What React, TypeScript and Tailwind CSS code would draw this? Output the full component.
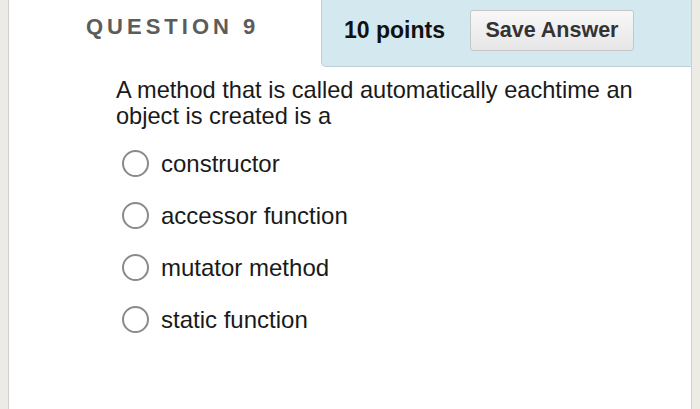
import React from "react";

const options = ["constructor", "accessor function", "mutator method", "static function"];

export default function App() {
  return (
    <div className="w-[700px] h-[409px] bg-[#ecebe6] flex overflow-hidden" style={{ fontFamily: '"Liberation Sans", Arial, sans-serif' }}>
      <div className="w-[8px] shrink-0 bg-[#ecebe6]" />
      <div className="w-[684px] shrink-0 bg-white border-l border-r border-[#cfcfcf] flex flex-col">
        <div className="flex h-[67px]">
          <div className="w-[312px] shrink-0 pl-[77px] pt-[10px]">
            <div className="text-[22px] font-bold tracking-[4px] text-[#5c5c5c]">QUESTION 9</div>
          </div>
          <div className="flex-1 bg-[#d3e8ef] border-l border-b border-[#bdd0d8] rounded-bl-[5px] flex items-center pl-[22px] pb-[6px] gap-[25px]">
            <div className="text-[23px] font-bold text-[#111]">10 points</div>
            <button className="h-[41px] w-[164px] rounded-[3px] border border-[#c6c6c6] bg-gradient-to-b from-[#f8f8f8] to-[#e6e6e6] text-[21.5px] font-bold text-[#333]">
              Save Answer
            </button>
          </div>
        </div>
        <div className="pl-[107px] pr-[30px] pt-[10px] text-[23.6px] leading-[26px] text-[#1a1a1a]">
          A method that is called automatically eachtime an object is created is a
        </div>
        <div className="flex flex-col pl-[113px] pt-[21px] gap-[25px]">
          {options.map((o) => (
            <div key={o} className="flex items-center gap-[12px] h-[27px]">
              <div className="w-[27px] h-[27px] rounded-full border-[2.5px] border-[#8a8a8a] bg-white shrink-0" />
              <div className="text-[24px] text-[#1a1a1a]">{o}</div>
            </div>
          ))}
        </div>
      </div>
    </div>
  );
}
